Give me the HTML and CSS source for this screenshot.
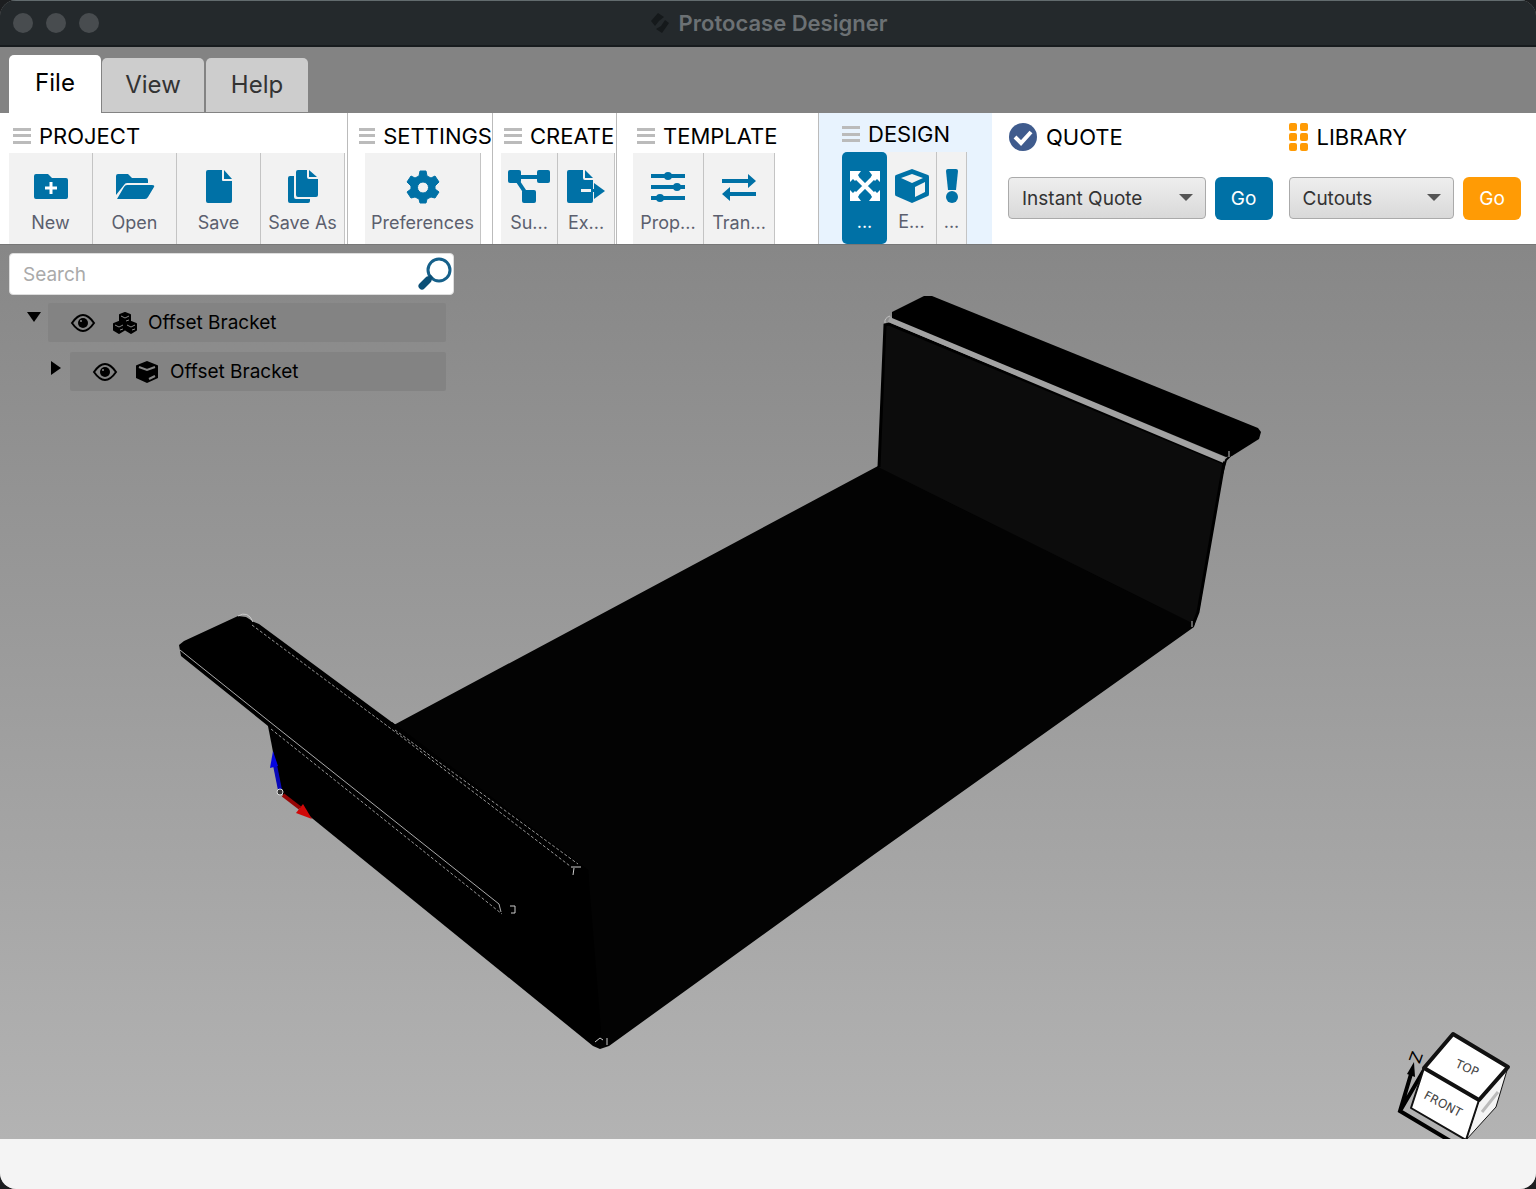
FILE: index.html
```html
<!DOCTYPE html>
<html lang="en">

<head>
    <meta charset="UTF-8">
    <title>Protocase Designer</title>
    <link rel="stylesheet" href="styles.css">
</head>

<body>

<div class="window">

    <header class="titlebar">
        <div class="lights"><span></span><span></span><span></span></div>
        <svg class="logo" width="22" height="24" viewBox="0 0 22 24"><path d="M2 10 L9 2 L15 6 L10 10 L6 15 Z M20 12 L13 22 L7 18 L12 15 L16 9 Z"/></svg>
        <h1>Protocase Designer</h1>
    </header>

    <nav class="tabs">
        <button class="tab active">File</button>
        <button class="tab">View</button>
        <button class="tab">Help</button>
    </nav>

    <div class="toolbar">
        <section class="group project">
            <h2><span class="grip"></span>PROJECT</h2>
            <div class="tools">
                <button class="tool">
                    <svg width="36" height="36" viewBox="0 0 36 36"><path d="M3 5h12l4 4h14q2 0 2 2v17q0 2-2 2H3q-2 0-2-2V7q0-2 2-2z"/><path class="cut" d="M18 13v12M12 19h12"/></svg>
                    New
                </button>
                <button class="tool">
                    <svg width="40" height="36" viewBox="0 0 40 36"><path d="M1 26V7q0-2 2-2h10l4 4h14q2 0 2 2v3H12q-2 0-3 2z"/><path d="M2 30 9 18q1-2 3-2h25q3 0 2 2l-6 10q-1 2-3 2z"/></svg>
                    Open
                </button>
                <button class="tool">
                    <svg width="36" height="36" viewBox="0 0 36 36"><path d="M7 1h14v10q0 1 1 1h9v20q0 2-2 2H7q-2 0-2-2V3q0-2 2-2z"/><path d="M23 1l8 9h-8z"/></svg>
                    Save
                </button>
                <button class="tool">
                    <svg width="36" height="36" viewBox="0 0 36 36"><path d="M13 1h9v7q0 2 2 2h9v16q0 2-2 2H13q-2 0-2-2V3q0-2 2-2z"/><path d="M24 1l8 7h-8z"/><path d="M5 7h4v21q0 2 2 2h14v2q0 2-2 2H5q-2 0-2-2V9q0-2 2-2z"/></svg>
                    Save As
                </button>
            </div>
        </section>

        <section class="group settings">
            <h2><span class="grip"></span>SETTINGS</h2>
            <div class="tools">
                <button class="tool">
                    <svg width="36" height="36" viewBox="0 0 36 36"><path fill-rule="evenodd" stroke="#0071a6" stroke-linejoin="round" d="M15 2h6l1 5 4 2 4-2 4 6-4 4v3l4 3-4 6-4-1-4 2-1 4h-6l-1-4-4-2-4 1-4-6 4-3v-3l-4-4 4-6 4 2 4-2zM18 13a5 5 0 1 0 0 11 5 5 0 0 0 0-11z"/></svg>
                    Preferences
                </button>
            </div>
        </section>

        <section class="group create">
            <h2><span class="grip"></span>CREATE</h2>
            <div class="tools">
                <button class="tool">
                    <svg width="44" height="36" viewBox="0 0 44 36"><rect x="1" y="1" width="13" height="13" rx="2"/><rect x="30" y="1" width="13" height="13" rx="2"/><rect x="15" y="21" width="14" height="13" rx="2"/><path class="line" d="M12 8h20M10 11l8 12"/></svg>
                    Su...
                </button>
                <button class="tool">
                    <svg width="40" height="36" viewBox="0 0 40 36"><path d="M3 1h14v8q0 2 2 2h8v9H15v3h12v9q0 2-2 2H3q-2 0-2-2V3q0-2 2-2z"/><path d="M19 1l8 8h-8zM28 20v-6l11 8-11 8v-7h-3v-3z"/></svg>
                    Ex...
                </button>
            </div>
        </section>

        <section class="group template">
            <h2><span class="grip"></span>TEMPLATE</h2>
            <div class="tools">
                <button class="tool">
                    <svg width="36" height="36" viewBox="0 0 36 36"><path class="line" d="M1 7h34M1 18h34M1 29h34"/><circle cx="18" cy="7" r="4"/><circle cx="27" cy="18" r="4"/><circle cx="10" cy="29" r="4"/></svg>
                    Prop...
                </button>
                <button class="tool">
                    <svg width="36" height="36" viewBox="0 0 36 36"><path class="line" d="M1 12h28M7 25h28"/><path d="M27 5l8 7-8 7zM9 18l-8 7 8 7z"/></svg>
                    Tran...
                </button>
            </div>
        </section>

        <section class="group design">
            <h2><span class="grip"></span>DESIGN</h2>
            <div class="tools">
                <button class="tool selected">
                    <svg width="32" height="36" viewBox="0 0 32 36"><path class="line" d="M6 8l20 20M26 8L6 28"/><path d="M1 3h11L9 7l1 2-4 4-2-2-3 3zM31 3H20l3 4-1 2 4 4 2-2 3 3zM1 33h11l-3-4 1-2-4-4-2 2-3-3zM31 33H20l3-4-1-2 4-4 2 2 3-3z"/></svg>
                    ...
                </button>
                <button class="tool">
                    <svg width="36" height="36" viewBox="0 0 36 36"><path fill-rule="evenodd" d="M18 1 34 7q1 0 1 2v17q0 2-1 2L18 35 2 28q-1 0-1-2V9q0-2 1-2zM18 6 7 10l11 5 11-5zM21 19v10l10-5V14z"/></svg>
                    E...
                </button>
                <button class="tool">
                    <svg width="14" height="36" viewBox="0 0 14 36"><path d="M3 1h8q2 0 2 2l-2 19H3L1 3q0-2 2-2z"/><circle cx="7" cy="29" r="6"/></svg>
                    ...
                </button>
            </div>
        </section>

        <section class="order quote">
            <h2>
                <svg width="30" height="30" viewBox="0 0 30 30"><circle cx="15" cy="15" r="14" fill="#3f5b8d"/><path d="M7 15l6 6 10-11" fill="none" stroke="#fff" stroke-width="4"/></svg>
                <label for="quote-type">QUOTE</label>
            </h2>
            <div class="order-row">
                <div class="select"><select id="quote-type"><option>Instant Quote</option></select></div>
                <button class="go">Go</button>
            </div>
        </section>

        <section class="order library">
            <h2>
                <svg width="20" height="28" viewBox="0 0 20 28" fill="#ff9b05"><rect x="0" y="0" width="8" height="8" rx="2"/><rect x="11" y="0" width="8" height="8" rx="2"/><rect x="0" y="10" width="8" height="8" rx="2"/><rect x="11" y="10" width="8" height="8" rx="2"/><rect x="0" y="20" width="8" height="8" rx="2"/><rect x="11" y="20" width="8" height="8" rx="2"/></svg>
                <label for="library-type">LIBRARY</label>
            </h2>
            <div class="order-row">
                <div class="select"><select id="library-type"><option>Cutouts</option></select></div>
                <button class="go">Go</button>
            </div>
        </section>
    </div>

    <main class="viewport">
        <svg class="model" viewBox="0 245 1536 894" preserveAspectRatio="xMidYMid slice">
            <!-- floor and front wall -->
            <path fill="#030303" d="M878 466 1000 490 1196 618 1194 627 872 856 609 1046 600 1049 570 900 392 726z"/>
            <path fill="#000" d="M268 726 281 793 593 1046 600 1049 601 1030 588 870 392 722z"/>
            <!-- back wall -->
            <path fill="#0c0c0c" d="M885 325 889 324 1224 463 1200 606 1196 620 1190 622 878 467z"/>
            <path fill="none" stroke="#000" stroke-width="3" d="M879 467 885 325 889 324 1224 463 1198 612 1193 625"/>
            <path fill="none" stroke="#a2a2a2" stroke-width="6" d="M889 319 1224 460"/>
            <path fill="#000" d="M892 312 924 296 932 296 1258 428 1261 432 1259 439 1232 456 1226 457 892 318z"/>
            <path fill="none" stroke="#000" stroke-width="2" d="M1232 454 1226 460 1222 474"/>
            <path fill="none" stroke="#c4c4c4" d="M890 316q-6 2-5 7M1229 451v6M1192 621v6"/>
            <!-- front flange -->
            <path fill="#000" d="M179 645 184 641 238 616 246 617 254 622 259 624 393 723 588 870 590 930 520 920 268 726 181 656z"/>
            <path fill="none" stroke="#aaa" d="M180 650 270 722 499 904 501 912"/>
            <g fill="none" stroke="#999" stroke-dasharray="3 2">
                <path d="M271 729 502 914"/>
                <path d="M252 625 390 728 570 866"/>
                <path d="M395 730 578 864"/>
            </g>
            <path fill="none" stroke="#ccc" d="M238 616q10-6 15 6M571 867h10M574 868l-1 7M510 906h5v7h-4M595 1042l5-4 3 2M607 1038v7"/>
            <!-- origin axes -->
            <path fill="none" stroke="#0808b8" stroke-width="4" d="M280 790 275 765"/>
            <path fill="#0505e0" d="M273 751 270 768 278 766z"/>
            <path fill="none" stroke="#960606" stroke-width="4" d="M283 795 300 808"/>
            <path fill="#d00808" d="M303 804 296 813 312 819z"/>
            <circle cx="280" cy="792" r="3" fill="#333" stroke="#ddd"/>
        </svg>

        <div class="browser">
            <form class="search">
                <input type="text" placeholder="Search" aria-label="Search">
                <button type="button" aria-label="Find"><svg width="36" height="36" viewBox="0 0 36 36"><circle cx="22" cy="14" r="11" fill="none" stroke="#16608a" stroke-width="3"/><path d="M11 24 5 30" fill="none" stroke="#0b4f76" stroke-width="7" stroke-linecap="round"/><path d="M15 20 11 24" stroke="#0b4f76" stroke-width="4"/></svg></button>
            </form>
            <ul class="tree">
                <li>
                    <svg class="arrow" width="16" height="12" viewBox="0 0 16 12"><path d="M1 1h14L8 11z"/></svg>
                    <div class="node">
                        <svg width="26" height="18" viewBox="0 0 26 18"><path d="M2 9q11-16 22 0-11 16-22 0z" fill="none" stroke="#000" stroke-width="2"/><circle cx="13" cy="9" r="5"/><circle cx="11" cy="7" r="1" fill="#858585"/></svg>
                        <svg width="24" height="22" viewBox="0 0 24 22"><path d="M12 1l5 2v6l-5 3-5-3V3zM6 10l5 2v6l-5 3-5-3v-6zM18 10l5 2v6l-5 3-5-3v-6z" stroke="#000" stroke-width="2" stroke-linejoin="round"/><path fill="none" stroke="#858585" d="M8 4l4 2 4-2M13 9l3-1M2 13l4 2 4-2M7 18l3-1M14 13l4 2 4-2M19 18l3-1"/></svg>
                        Offset Bracket
                    </div>
                </li>
                <li class="child">
                    <svg class="arrow" width="12" height="16" viewBox="0 0 12 16"><path d="M1 1v14l10-7z"/></svg>
                    <div class="node">
                        <svg width="26" height="18" viewBox="0 0 26 18"><path d="M2 9q11-16 22 0-11 16-22 0z" fill="none" stroke="#000" stroke-width="2"/><circle cx="13" cy="9" r="5"/><circle cx="11" cy="7" r="1" fill="#858585"/></svg>
                        <svg width="24" height="22" viewBox="0 0 24 22"><path d="M12 0l10 4q1 0 1 1v12l-11 5-11-5V5q0-1 1-1z"/><path d="M4 6l8 3 8-3M14 18l6-3" fill="none" stroke="#858585" stroke-width="2"/></svg>
                        Offset Bracket
                    </div>
                </li>
            </ul>
        </div>

        <svg class="cube" width="126" height="114" viewBox="1390 1025 126 114">
            <path fill="none" stroke="#000" stroke-width="4" d="M1411 1074 1400 1111 1452 1142M1400 1111 1424 1070"/>
            <path d="M1414 1062 1407 1074 1415 1077z"/>
            <g fill="#fff" stroke="#111" stroke-linejoin="round">
                <path fill="#f4f4f4" d="M1508 1067 1496 1107 1466 1140 1479 1100z"/>
                <path stroke-width="2" d="M1424 1068 1479 1100 1466 1140 1411 1108z"/>
                <path stroke-width="4" d="M1453 1034 1508 1067 1479 1100 1424 1068z"/>
            </g>
            <path fill="none" stroke="#bbb" stroke-width="3" d="M1482 1112 1498 1092"/>
            <text x="1467" y="1072" transform="rotate(24 1467 1068)">TOP</text>
            <text x="1443" y="1108" transform="rotate(28 1443 1104)">FRONT</text>
            <text class="axis" x="1415" y="1062" transform="rotate(110 1415 1057)">Z</text>
        </svg>
    </main>

    <footer class="statusbar"></footer>

</div>

</body>
</html>
```
FILE: styles.css
```css
* {
    box-sizing: border-box;
}

body {
    margin: 0;
    background-color: #1c1e20;
    font-family: Inter, "Liberation Sans", sans-serif;
    color: #000;
}

h1, h2 {
    margin: 0;
}

button, select, input {
    font-family: inherit;
    margin: 0;
    padding: 0;
    border: none;
}

.window {
    display: flex;
    flex-direction: column;
    min-height: 100vh;
    border-radius: 16px;
    overflow: hidden;
    background-color: #838383;
}

/* title bar */

.titlebar {
    position: relative;
    display: flex;
    align-items: center;
    justify-content: center;
    height: 47px;
    border-top: 1px solid #626b6e;
    border-bottom: 2px solid #171b1e;
    background-color: #24292c;
}

.titlebar h1 {
    margin-left: 8px;
    font-size: 22px;
    line-height: 24px;
    font-weight: 600;
    color: #6c7174;
}

.logo {
    fill: #15191b;
}

.lights {
    position: absolute;
    left: 13px;
    display: flex;
    gap: 13px;
}

.lights span {
    width: 20px;
    height: 20px;
    border-radius: 50%;
    background-color: #484c4f;
}

/* menu tabs */

.tabs {
    display: flex;
    align-items: flex-end;
    height: 66px;
    padding-left: 9px;
}

.tab {
    height: 54px;
    width: 102px;
    margin: 0 1px 1px;
    padding-bottom: 2px;
    border-radius: 5px 5px 0 0;
    background-color: #cdcdcd;
    font-size: 24px;
    color: #333;
}

.tab.active {
    height: 58px;
    width: 92px;
    margin: 0;
    padding-bottom: 4px;
    background-color: #fff;
    color: #000;
}

/* toolbar */

.toolbar {
    display: flex;
    height: 132px;
    border-bottom: 1px solid #777;
    background-color: #fff;
}

.group {
    flex: none;
    display: flex;
    flex-direction: column;
    border-right: 1px solid #bbb;
}

.group h2, .order h2 {
    display: flex;
    align-items: center;
    height: 40px;
    padding-top: 5px;
    font-size: 22px;
    font-weight: 400;
}

.grip {
    width: 18px;
    height: 16px;
    margin-right: 8px;
    border-top: 3px solid #bbb;
    border-bottom: 3px solid #bbb;
    background: linear-gradient(#bbb, #bbb) center / 18px 3px no-repeat;
}

.tools {
    flex: 1;
    display: flex;
}

.tool {
    display: flex;
    flex-direction: column;
    align-items: center;
    gap: 7px;
    padding-top: 16px;
    border-right: 1px solid #c4c4c4;
    background-color: #f2f2f2;
    font-size: 18px;
    line-height: 22px;
    color: #5b5f6e;
    white-space: nowrap;
}

.tool svg {
    fill: #0071a6;
}

.tool .line {
    fill: none;
    stroke: #0071a6;
    stroke-width: 4;
}

.tool .cut {
    fill: none;
    stroke: #fff;
    stroke-width: 3;
}

.project {
    width: 348px;
}

.project h2 {
    padding-left: 13px;
}

.project .tools {
    padding-left: 9px;
}

.project .tool {
    width: 84px;
}

.settings {
    width: 145px;
}

.settings h2 {
    padding-left: 11px;
}

.settings .tools {
    padding-left: 17px;
}

.settings .tool {
    width: 116px;
}

.create {
    width: 124px;
}

.create h2 {
    padding-left: 11px;
}

.create .tools {
    padding-left: 8px;
}

.create .tool {
    width: 57px;
}

.template {
    width: 202px;
}

.template h2 {
    padding-left: 20px;
}

.template .tools {
    padding-left: 16px;
}

.template .tool {
    width: 71px;
}

.design {
    width: 173px;
    border-right: none;
    background-color: #e8f3fe;
}

.design h2 {
    height: 39px;
    padding-top: 3px;
    padding-left: 23px;
}

.design .tools {
    padding-left: 23px;
}

.design .tool {
    width: 50px;
}

.design .tool:last-child {
    width: 30px;
}

.design .tool.selected {
    width: 45px;
    border: none;
    border-radius: 5px;
    background-color: #0071a6;
    color: #fff;
}

.tool.selected svg {
    fill: #fff;
}

.tool.selected .line {
    stroke: #fff;
}

.order {
    flex: 281;
    padding-left: 16px;
}

.order.library {
    flex: 247;
    padding-right: 15px;
}

.order h2 {
    gap: 8px;
    height: 42px;
}

.order-row {
    display: flex;
    gap: 9px;
    margin-top: 22px;
}

.select {
    position: relative;
    flex: 1;
}

.select::after {
    content: "";
    position: absolute;
    right: 13px;
    top: 17px;
    border: 7px solid transparent;
    border-top-color: #555;
    border-bottom: none;
    pointer-events: none;
}

.select select {
    appearance: none;
    width: 100%;
    height: 42px;
    padding-left: 13px;
    border: 1px solid #aaa;
    border-radius: 4px;
    background: linear-gradient(#eee, #d9d9d9);
    font-size: 19px;
    color: #333;
}

.go {
    width: 58px;
    height: 43px;
    border-radius: 6px;
    background-color: #0071a6;
    font-size: 19px;
    color: #fff;
}

.library .go {
    background-color: #ff9b05;
}

/* 3d view */

.viewport {
    position: relative;
    flex: 1;
    min-height: 500px;
    background: linear-gradient(#878787, #b3b3b3);
}

.model {
    position: absolute;
    width: 100%;
    height: 100%;
}

.browser {
    position: relative;
    width: 454px;
    padding: 8px 0 0 9px;
}

.search {
    display: flex;
    align-items: center;
    height: 42px;
    border: 1px solid #ddd;
    border-radius: 4px;
    background-color: #fff;
}

.search input {
    flex: 1;
    padding-left: 13px;
    background: none;
    font-size: 19px;
}

.search input::placeholder {
    color: #aaa;
}

.search button {
    height: 36px;
    background: none;
}

.tree {
    list-style: none;
    margin: 8px 8px 0 0;
    padding: 0 0 0 17px;
}

.tree li {
    display: flex;
    margin-bottom: 10px;
}

.tree li.child {
    padding-left: 22px;
}

.arrow {
    flex: none;
    width: 16px;
    margin: 8px 6px 0 0;
}

.node {
    flex: 1;
    display: flex;
    align-items: center;
    gap: 11px;
    height: 39px;
    padding-left: 22px;
    border-radius: 2px;
    background-color: #838383;
    font-size: 19px;
}

.node svg:first-child {
    margin-right: 6px;
}

.cube {
    position: absolute;
    right: 20px;
    bottom: 0;
}

.cube text {
    font-family: "DejaVu Sans", sans-serif;
    font-size: 12px;
    text-anchor: middle;
    fill: #444;
}

.cube .axis {
    font-size: 16px;
    fill: #000;
}

.statusbar {
    height: 50px;
    background-color: #f4f4f4;
}
```
